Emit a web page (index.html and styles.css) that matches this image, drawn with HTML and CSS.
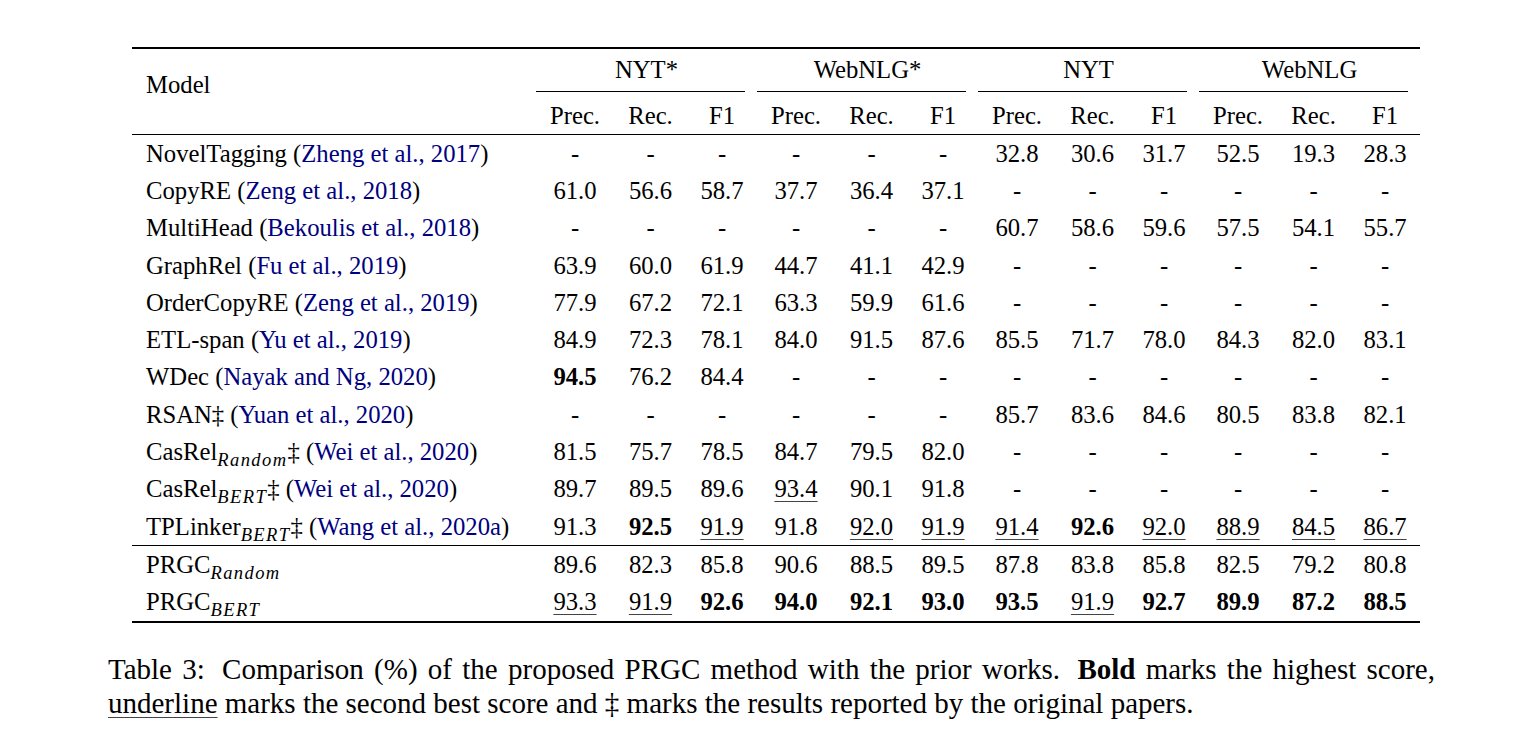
FILE: index.html
```html
<!DOCTYPE html>
<html lang="en">
<head>
<meta charset="utf-8">
<title>Table 3</title>
<link rel="stylesheet" href="styles.css">
</head>
<body>
<div class="page">
  <table class="res">
    <colgroup>
      <col class="c-model">
      <col class="c-p"><col class="c-r"><col class="c-f">
      <col class="c-p"><col class="c-r"><col class="c-f">
      <col class="c-p"><col class="c-r"><col class="c-f">
      <col class="c-p"><col class="c-r"><col class="c-f">
    </colgroup>
    <thead>
      <tr class="h1">
        <th class="model mhead" rowspan="2">Model</th>
        <th class="grp" colspan="3"><div class="gname">NYT*</div><div class="cmid"></div></th>
        <th class="grp" colspan="3"><div class="gname">WebNLG*</div><div class="cmid"></div></th>
        <th class="grp" colspan="3"><div class="gname">NYT</div><div class="cmid"></div></th>
        <th class="grp" colspan="3"><div class="gname">WebNLG</div><div class="cmid"></div></th>
      </tr>
      <tr class="h2">
        <th>Prec.</th><th>Rec.</th><th>F1</th>
        <th>Prec.</th><th>Rec.</th><th>F1</th>
        <th>Prec.</th><th>Rec.</th><th>F1</th>
        <th>Prec.</th><th>Rec.</th><th>F1</th>
      </tr>
    </thead>
    <tbody>
      <tr><td class="model">NovelTagging (<span class="cite">Zheng et al., 2017</span>)</td>
        <td>-</td><td>-</td><td>-</td><td>-</td><td>-</td><td>-</td>
        <td>32.8</td><td>30.6</td><td>31.7</td><td>52.5</td><td>19.3</td><td>28.3</td></tr>
      <tr><td class="model">CopyRE (<span class="cite">Zeng et al., 2018</span>)</td>
        <td>61.0</td><td>56.6</td><td>58.7</td><td>37.7</td><td>36.4</td><td>37.1</td>
        <td>-</td><td>-</td><td>-</td><td>-</td><td>-</td><td>-</td></tr>
      <tr><td class="model">MultiHead (<span class="cite">Bekoulis et al., 2018</span>)</td>
        <td>-</td><td>-</td><td>-</td><td>-</td><td>-</td><td>-</td>
        <td>60.7</td><td>58.6</td><td>59.6</td><td>57.5</td><td>54.1</td><td>55.7</td></tr>
      <tr><td class="model">GraphRel (<span class="cite">Fu et al., 2019</span>)</td>
        <td>63.9</td><td>60.0</td><td>61.9</td><td>44.7</td><td>41.1</td><td>42.9</td>
        <td>-</td><td>-</td><td>-</td><td>-</td><td>-</td><td>-</td></tr>
      <tr><td class="model">OrderCopyRE (<span class="cite">Zeng et al., 2019</span>)</td>
        <td>77.9</td><td>67.2</td><td>72.1</td><td>63.3</td><td>59.9</td><td>61.6</td>
        <td>-</td><td>-</td><td>-</td><td>-</td><td>-</td><td>-</td></tr>
      <tr><td class="model">ETL-span (<span class="cite">Yu et al., 2019</span>)</td>
        <td>84.9</td><td>72.3</td><td>78.1</td><td>84.0</td><td>91.5</td><td>87.6</td>
        <td>85.5</td><td>71.7</td><td>78.0</td><td>84.3</td><td>82.0</td><td>83.1</td></tr>
      <tr><td class="model">WDec (<span class="cite">Nayak and Ng, 2020</span>)</td>
        <td><b>94.5</b></td><td>76.2</td><td>84.4</td><td>-</td><td>-</td><td>-</td>
        <td>-</td><td>-</td><td>-</td><td>-</td><td>-</td><td>-</td></tr>
      <tr><td class="model">RSAN‡ (<span class="cite">Yuan et al., 2020</span>)</td>
        <td>-</td><td>-</td><td>-</td><td>-</td><td>-</td><td>-</td>
        <td>85.7</td><td>83.6</td><td>84.6</td><td>80.5</td><td>83.8</td><td>82.1</td></tr>
      <tr><td class="model">CasRel<sub class="ms">Random</sub>‡ (<span class="cite">Wei et al., 2020</span>)</td>
        <td>81.5</td><td>75.7</td><td>78.5</td><td>84.7</td><td>79.5</td><td>82.0</td>
        <td>-</td><td>-</td><td>-</td><td>-</td><td>-</td><td>-</td></tr>
      <tr><td class="model">CasRel<sub class="ms">BERT</sub>‡ (<span class="cite">Wei et al., 2020</span>)</td>
        <td>89.7</td><td>89.5</td><td>89.6</td><td><u>93.4</u></td><td>90.1</td><td>91.8</td>
        <td>-</td><td>-</td><td>-</td><td>-</td><td>-</td><td>-</td></tr>
      <tr><td class="model">TPLinker<sub class="ms">BERT</sub>‡ (<span class="cite">Wang et al., 2020a</span>)</td>
        <td>91.3</td><td><b>92.5</b></td><td><u>91.9</u></td><td>91.8</td><td><u>92.0</u></td><td><u>91.9</u></td>
        <td><u>91.4</u></td><td><b>92.6</b></td><td><u>92.0</u></td><td><u>88.9</u></td><td><u>84.5</u></td><td><u>86.7</u></td></tr>
    </tbody>
    <tbody class="ours">
      <tr><td class="model">PRGC<sub class="ms">Random</sub></td>
        <td>89.6</td><td>82.3</td><td>85.8</td><td>90.6</td><td>88.5</td><td>89.5</td>
        <td>87.8</td><td>83.8</td><td>85.8</td><td>82.5</td><td>79.2</td><td>80.8</td></tr>
      <tr><td class="model">PRGC<sub class="ms">BERT</sub></td>
        <td><u>93.3</u></td><td><u>91.9</u></td><td><b>92.6</b></td><td><b>94.0</b></td><td><b>92.1</b></td><td><b>93.0</b></td>
        <td><b>93.5</b></td><td><u>91.9</u></td><td><b>92.7</b></td><td><b>89.9</b></td><td><b>87.2</b></td><td><b>88.5</b></td></tr>
    </tbody>
  </table>
  <p class="caption">Table 3:<span class="xs"></span> Comparison (%) of the proposed PRGC method with the prior works.<span class="xs"></span> <b>Bold</b> marks the highest score, <u>underline</u> marks the second best score and ‡ marks the results reported by the original papers.</p>
</div>
</body>
</html>
```

FILE: styles.css
```css
html, body {
  margin: 0;
  padding: 0;
  background: #ffffff;
}

.page {
  padding: 47px 0 0 108px;
  color: #000;
  font-family: "Liberation Serif", "Times New Roman", serif;
}

.res {
  margin-left: 24px;
  width: 1288px;
  table-layout: fixed;
  border-collapse: separate;
  border-spacing: 0;
  border-top: 2px solid #000;
  border-bottom: 2px solid #000;
  font-size: 24.7px;
}

.c-model { width: 404px; }
.c-p { width: 78px; }
.c-r { width: 73px; }
.c-f { width: 70px; }

.res th {
  font-weight: normal;
  padding: 0;
  text-align: center;
  white-space: nowrap;
}

.h1 .grp {
  height: 43px;
  vertical-align: bottom;
}

.gname {
  height: 42px;
  line-height: 42px;
}

.cmid {
  height: 1px;
  background: #000;
  margin-right: 12px;
}

.h2 th {
  height: 43px;
  border-bottom: 1px solid #000;
  padding-top: 6px;
  box-sizing: border-box;
}

.res th.mhead {
  text-align: left;
  padding: 0 0 14px 14px;
  border-bottom: 1px solid #000;
  vertical-align: middle;
}

.res td {
  height: 37.3px;
  padding: 0;
  text-align: center;
  vertical-align: middle;
  white-space: nowrap;
}

.res td.model {
  text-align: left;
  padding-left: 14px;
}

.ours tr:first-child td {
  border-top: 1px solid #000;
}

.cite {
  color: #000080;
}

.ms {
  font-style: italic;
  font-size: 18.5px;
  letter-spacing: 1.4px;
  vertical-align: -6px;
  line-height: 0;
}

.res b {
  font-weight: bold;
}

.res u,
.caption u {
  text-decoration: underline;
  text-decoration-thickness: 1px;
  text-underline-offset: 4px;
  text-decoration-color: #444;
}

.caption {
  margin: 29px 0 0 0;
  width: 1327px;
  font-size: 29px;
  line-height: 34px;
  text-align: justify;
  text-align-last: left;
}

.xs {
  display: inline-block;
  width: 7px;
}
```
